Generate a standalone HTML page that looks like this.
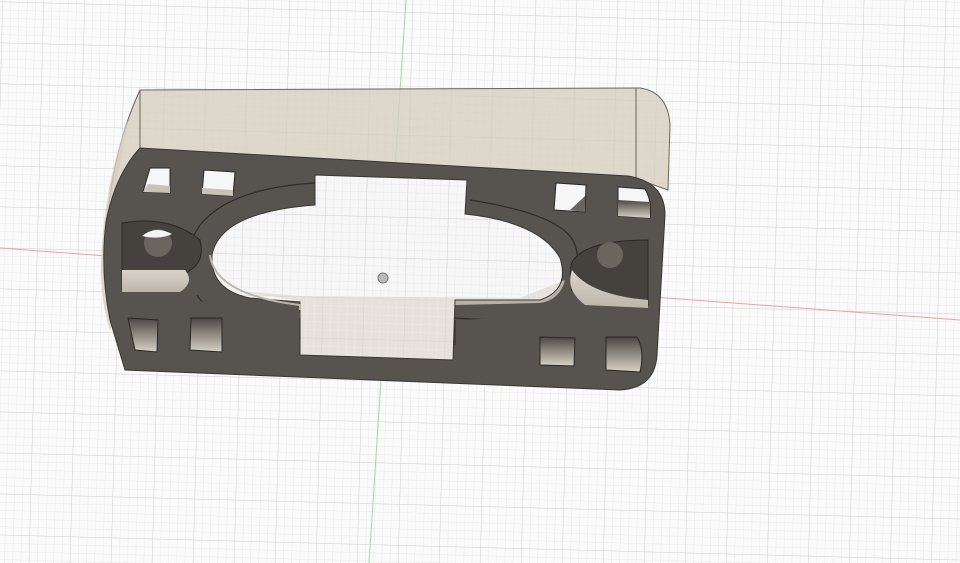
<!DOCTYPE html>
<html><head><meta charset="utf-8"><style>
html,body{margin:0;padding:0;background:#fafafa;width:960px;height:563px;overflow:hidden}
</style></head><body>
<svg width="960" height="563" viewBox="0 0 960 563" xmlns="http://www.w3.org/2000/svg">
<defs>
<pattern id="minor" width="8.2" height="8.2" patternUnits="userSpaceOnUse" patternTransform="rotate(1.5) translate(3,2)">
<path d="M8.2 0V8.2M0 8.2H8.2" stroke="#e9e9e9" stroke-width="1" fill="none"/>
</pattern>
<pattern id="major" width="41" height="41" patternUnits="userSpaceOnUse" patternTransform="rotate(1.5) translate(3,2)">
<path d="M41 0V41M0 41H41" stroke="#d2d2d2" stroke-width="1" fill="none"/>
</pattern>
<linearGradient id="sh" x1="0" y1="0" x2="0" y2="1">
<stop offset="0" stop-color="#4a4642"/><stop offset="1" stop-color="#d8d2c8"/>
</linearGradient>
<linearGradient id="sh2" x1="0" y1="0" x2="0" y2="1">
<stop offset="0" stop-color="#d9d3c9"/><stop offset="1" stop-color="#bdb6ab"/>
</linearGradient>
<clipPath id="cc"><path d="M315 175 L467 180 L465 214 Q540 222 560 258 Q570 290 540 300 L455 300 L453 360 L300 355 L300 302 L250 298 Q210 290 212 255 Q220 212 315 205Z"/></clipPath>
</defs>
<rect width="960" height="563" fill="#fafafa"/>
<rect width="960" height="563" fill="url(#minor)"/>
<rect width="960" height="563" fill="url(#major)"/>
<line x1="0" y1="248" x2="960" y2="320" stroke="#f0a0a0" stroke-width="1"/>
<line x1="406" y1="0" x2="369" y2="563" stroke="#9ae09a" stroke-width="1"/>

<!-- tan shell -->
<path d="M140 90 L640 88 Q668 92 670 125 L668 190 L640 180 L140 150 L115 200 L104 280 L106 235 Q112 150 140 90Z" fill="#d6cec1" fill-opacity="0.8" stroke="#6b655d" stroke-width="1"/>
<path d="M128 120 Q105 180 101 260 Q100 300 110 330 L115 320 Q106 270 110 220 Z" fill="#d6cec1" fill-opacity="0.8"/>
<line x1="140" y1="90" x2="140" y2="152" stroke="#6b655d"/>
<line x1="636" y1="88" x2="636" y2="180" stroke="#6b655d"/>

<!-- plate -->
<path d="M140 148 L628 176 Q665 182 665 215 L657 355 Q655 388 620 390 L125 370 L110 320 Q100 270 106 222 Q115 175 140 148Z" fill="#57534e" stroke="#3a3733" stroke-width="1"/>

<!-- central cutout -->
<path d="M315 175 L467 180 L465 214 Q540 222 560 258 Q570 290 540 300 L455 300 L453 360 L300 355 L300 302 L250 298 Q210 290 212 255 Q220 212 315 205Z" fill="#f6f6f6"/>
<path d="M228 290 Q300 300 300 302 L300 355 L453 360 L455 305 L540 303 Q560 300 565 280 L520 298 L300 296Z" fill="#e0d9cf" fill-opacity="0.7"/>
<rect width="960" height="563" fill="url(#minor)" clip-path="url(#cc)"/>
<rect width="960" height="563" fill="url(#major)" clip-path="url(#cc)"/>
<path d="M315 175 L467 180 L465 214 Q540 222 560 258 Q570 290 540 300 L455 300 L453 360 L300 355 L300 302 L250 298 Q210 290 212 255 Q220 212 315 205Z" fill="none" stroke="#3a3733"/>

<!-- ring plate arcs -->
<path d="M315 183 Q230 188 200 225 L192 238 M197 295 Q215 325 300 332" stroke="#2f2c29" stroke-width="1.2" fill="none"/>
<path d="M300 313 L300 340 L220 330 Q195 318 190 300 Z" fill="#57534e"/>
<path d="M455 318 Q540 325 565 300 Q585 275 575 245 Q565 215 470 200" stroke="#2f2c29" stroke-width="1.2" fill="none"/>
<path d="M455 320 L455 345 L540 340 Q575 330 580 300 L570 290 Q550 318 455 320Z" fill="#57534e"/>
<path d="M300 318 L300 340 M455 320 L455 345" stroke="#2f2c29"/>
<path d="M210 255 Q215 295 300 305 L300 310" stroke="#bdb6ab" stroke-width="2" fill="none"/>

<!-- left pocket -->
<path d="M122 223 Q170 215 200 240 Q205 262 190 270 Q170 290 122 290Z" fill="#45423e" stroke="#2a2826"/>
<path d="M122 270 L185 270 Q195 282 180 292 L122 292Z" fill="url(#sh2)"/>
<circle cx="158" cy="243" r="14" fill="#6a655f"/>
<path d="M142 236 Q155 225 172 234 Q160 240 142 236Z" fill="#f4f4f4"/>
<!-- right pocket -->
<path d="M648 240 L648 305 L585 300 Q565 285 572 262 Q585 240 648 240Z" fill="#45423e" stroke="#2a2826"/>
<path d="M572 270 Q590 295 648 300 L648 308 L585 305 Q565 290 572 270Z" fill="url(#sh2)"/>
<circle cx="610" cy="255" r="13" fill="#6a655f"/>

<!-- small holes top -->
<path d="M150 168 L170 168 L170 193 L143 192Z" fill="#f6f6f6" stroke="#2a2826"/>
<path d="M148 184 L170 186 L170 193 L143 192Z" fill="#c9c2b7"/>
<path d="M204 170 L235 172 L233 196 L202 194Z" fill="#f6f6f6" stroke="#2a2826"/>
<path d="M202 188 L233 190 L233 196 L202 194Z" fill="#c9c2b7"/>
<path d="M556 183 L586 185 L585 212 L554 210Z" fill="#f6f6f6" stroke="#2a2826"/>
<path d="M570 210 L585 196 L585 212Z" fill="#6a655f"/>
<path d="M618 187 L645 189 Q652 200 650 218 L618 216Z" fill="#f6f6f6" stroke="#2a2826"/>
<path d="M618 200 L650 202 L650 218 L618 216Z" fill="url(#sh)"/>
<!-- small holes bottom -->
<path d="M128 318 L158 320 L157 352 L135 350Z" fill="url(#sh)" stroke="#2a2826"/>
<path d="M191 318 L222 318 L222 352 L190 350Z" fill="url(#sh)" stroke="#2a2826"/>
<path d="M540 337 L575 338 L574 366 L540 365Z" fill="url(#sh)" stroke="#2a2826"/>
<path d="M606 337 L637 337 Q645 350 640 372 L606 370Z" fill="url(#sh)" stroke="#2a2826"/>

<!-- origin marker -->
<circle cx="383" cy="278" r="5" fill="#bbb" stroke="#777"/>
</svg>
</body></html>
